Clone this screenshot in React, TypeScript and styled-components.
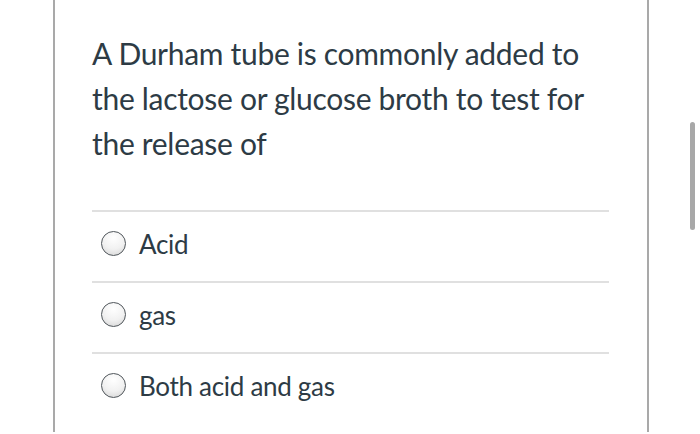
import styled, { createGlobalStyle } from "styled-components";

const GlobalStyle = createGlobalStyle`
  html, body {
    margin: 0;
    padding: 0;
    background: #ffffff;
  }
  body {
    font-family: Lato, "Open Sans", sans-serif;
    color: #2d3b45;
  }
`;

const Page = styled.div`
  position: relative;
  width: 700px;
  height: 434px;
  overflow: hidden;
  background: #ffffff;
`;

const Card = styled.section`
  margin-left: 53px;
  width: 596px;
  height: 432px;
  border-left: 2px solid #a9a9a9;
  border-right: 2px solid #a9a9a9;
  box-sizing: border-box;
  padding: 31px 38px 0 37px;
`;

const Question = styled.div`
  font-size: 30px;
  line-height: 45px;
  letter-spacing: -0.3px;
  margin-bottom: 44px;
`;

const Options = styled.div`
  display: flex;
  flex-direction: column;
`;

const Option = styled.label`
  display: flex;
  align-items: center;
  gap: 13px;
  height: 71px;
  box-sizing: border-box;
  padding: 0 0 6px 9px;
  border-top: 2px solid #e0e0e0;
  font-size: 26px;
  letter-spacing: -0.3px;
`;

const Radio = styled.span`
  width: 23px;
  height: 23px;
  border-radius: 50%;
  border: 1.5px solid #50565b;
  background: radial-gradient(circle at 50% 25%, #ffffff 0%, #f1f1f1 55%, #d2d2d2 100%);
  flex-shrink: 0;
`;

const ScrollThumb = styled.div`
  position: absolute;
  left: 690px;
  top: 122px;
  width: 5px;
  height: 108px;
  border-radius: 3px;
  background: #a8a8a8;
`;

const answers = ["Acid", "gas", "Both acid and gas"];

export default function App() {
  return (
    <Page>
      <GlobalStyle />
      <Card>
        <Question>
          A Durham tube is commonly added to the lactose or glucose broth to test for the release of
        </Question>
        <Options>
          {answers.map((a) => (
            <Option key={a}>
              <Radio />
              {a}
            </Option>
          ))}
        </Options>
      </Card>
      <ScrollThumb />
    </Page>
  );
}
